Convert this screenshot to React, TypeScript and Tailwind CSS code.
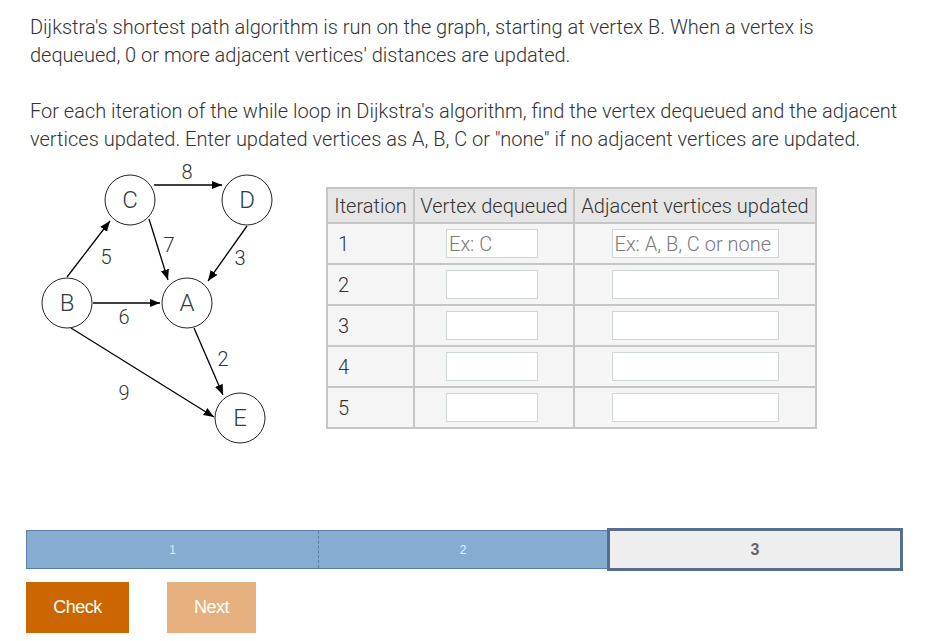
import React from "react";

type Node = { id: string; x: number; y: number };

// graph coordinates are in the svg's own space
const nodes: Node[] = [
  { id: "B", x: 41, y: 143 },
  { id: "A", x: 161, y: 143 },
  { id: "C", x: 104, y: 40 },
  { id: "D", x: 221, y: 40 },
  { id: "E", x: 214, y: 258 },
];

const R = 25;

// edge end points, as drawn in the original figure
const edges = [
  { k: "BC", x1: 41, y1: 117, x2: 84, y2: 61 },
  { k: "CD", x1: 128, y1: 25, x2: 196, y2: 25 },
  { k: "CA", x1: 123, y1: 59, x2: 142, y2: 120 },
  { k: "DA", x1: 221, y1: 66, x2: 182, y2: 121 },
  { k: "BA", x1: 67, y1: 143, x2: 134, y2: 143 },
  { k: "AE", x1: 168, y1: 168, x2: 197, y2: 235 },
  { k: "BE", x1: 45, y1: 168, x2: 188, y2: 257 },
];

const weights = [
  { t: "8", x: 161, y: 12 },
  { t: "5", x: 80, y: 97 },
  { t: "7", x: 143, y: 85 },
  { t: "3", x: 214, y: 98 },
  { t: "6", x: 98, y: 157 },
  { t: "2", x: 197, y: 199 },
  { t: "9", x: 98, y: 233 },
];

function Graph() {
  return (
    <svg width="300" height="290" viewBox="0 0 300 290" className="shrink-0">
      <defs>
        <marker id="arrow" viewBox="0 0 10 10" refX="10" refY="5" markerWidth="8" markerHeight="8" orient="auto">
          <path d="M0,1 L10,5 L0,9 z" fill="#000" />
        </marker>
      </defs>
      {edges.map((e) => (
        <line
          key={e.k}
          x1={e.x1}
          y1={e.y1}
          x2={e.x2}
          y2={e.y2}
          stroke="#000"
          strokeWidth="1.3"
          markerEnd="url(#arrow)"
        />
      ))}
      {nodes.map((n) => (
        <g key={n.id}>
          <circle cx={n.x} cy={n.y} r={R} fill="#fff" stroke="#222" strokeWidth="1" />
          <text
            x={n.x}
            y={n.y + 8}
            textAnchor="middle"
            fontSize="24"
            fontWeight="300"
            fill="#2f3d48"
            fontFamily="Roboto, sans-serif"
          >
            {n.id}
          </text>
        </g>
      ))}
      {weights.map((w) => (
        <text
          key={w.t}
          x={w.x}
          y={w.y + 7}
          textAnchor="middle"
          fontSize="20"
          fontWeight="300"
          fill="#333"
          fontFamily="Roboto, sans-serif"
        >
          {w.t}
        </text>
      ))}
    </svg>
  );
}

function Table() {
  const rows = [1, 2, 3, 4, 5];
  return (
    <table className="mt-[27px] border-collapse border-2 border-[#c6c6c6] text-[20px] font-light text-[#333] leading-none">
      <thead>
        <tr className="h-[35px] bg-[#e6e6e6]">
          <th className="w-[87px] border-2 border-[#c6c6c6] px-[4px] font-light">Iteration</th>
          <th className="w-[160px] border-2 border-[#c6c6c6] px-[4px] font-light">Vertex dequeued</th>
          <th className="w-[242px] border-2 border-[#c6c6c6] px-[4px] font-light">Adjacent vertices updated</th>
        </tr>
      </thead>
      <tbody>
        {rows.map((r) => (
          <tr key={r} className="h-[41px] bg-[#f5f5f5]">
            <td className="border-2 border-[#c6c6c6] pl-[10px]">{r}</td>
            <td className="border-2 border-[#c6c6c6]">
              <div className="flex justify-center pr-[4px]">
                <input
                  placeholder={r === 1 ? "Ex: C" : ""}
                  className="h-[29px] w-[92px] border border-[#cfd6da] bg-white px-[2px] text-[20px] font-light placeholder:text-[#7a7a7a] outline-none"
                />
              </div>
            </td>
            <td className="border-2 border-[#c6c6c6]">
              <div className="flex justify-center">
                <input
                  placeholder={r === 1 ? "Ex: A, B, C or none" : ""}
                  className="h-[29px] w-[167px] border border-[#cfd6da] bg-white px-[2px] text-[20px] font-light placeholder:text-[#7a7a7a] outline-none"
                />
              </div>
            </td>
          </tr>
        ))}
      </tbody>
    </table>
  );
}

export default function App() {
  return (
    <div className="min-h-[641px] bg-white px-[26px] pt-[13px] font-['Roboto',sans-serif] text-[#333]">
      <div className="pl-[4px] text-[20px] font-light leading-[28px]">
        <p>
          Dijkstra's shortest path algorithm is run on the graph, starting at vertex B. When a vertex is
          <br />
          dequeued, 0 or more adjacent vertices' distances are updated.
        </p>
        <p className="mt-[28px]">
          For each iteration of the while loop in Dijkstra's algorithm, find the vertex dequeued and the adjacent
          <br />
          vertices updated. Enter updated vertices as A, B, C or "none" if no adjacent vertices are updated.
        </p>
      </div>

      <div className="mt-[7px] flex items-start">
        <Graph />
        <Table />
      </div>

      {/* progress */}
      <div className="mt-[78px] flex h-[43px] w-[877px] items-center">
        <div className="flex h-[39px] flex-1 items-center border border-r-0 border-[#5b80a8] bg-[#87acd2] font-['Liberation_Sans',sans-serif] text-[12px]">
          <span className="flex flex-1 justify-center text-[#d8ecf4]">1</span>
          <span className="h-full border-l border-dashed border-[#5b80a8]" />
          <span className="flex w-[288px] justify-center text-[#e8f0f8]">2</span>
        </div>
        <div className="flex h-[43px] w-[296px] items-center justify-center border-[3px] border-[#566d90] bg-[#eeeeee] font-['Liberation_Sans',sans-serif] text-[16px] font-bold text-[#666]">
          3
        </div>
      </div>

      <div className="mt-[11px] flex gap-[38px]">
        <button className="h-[51px] w-[103px] bg-[#cc6600] font-['Liberation_Sans',sans-serif] text-[18px] tracking-[-0.5px] text-white">
          Check
        </button>
        <button className="h-[51px] w-[89px] bg-[#e6b17e] font-['Liberation_Sans',sans-serif] text-[18px] tracking-[-0.5px] text-white">
          Next
        </button>
      </div>
    </div>
  );
}
